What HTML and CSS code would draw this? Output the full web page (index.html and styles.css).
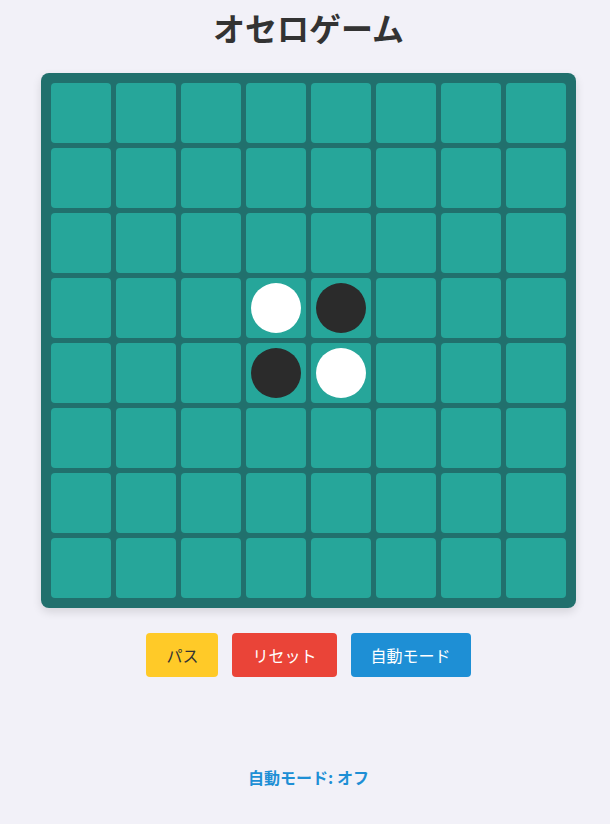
FILE: index.html
```html
<!DOCTYPE html>
<html lang="ja">
<head>
  <meta charset="UTF-8">
  <meta name="viewport" content="width=device-width, initial-scale=1.0">
  <title>オセロゲーム</title>
  <link rel="stylesheet" href="styles.css">
</head>
<body>
  <div class="container">
    <h1>オセロゲーム</h1>

    <div class="board" id="board"></div>

    <div class="controls">
      <button type="button" class="btn btn-pass">パス</button>
      <button type="button" class="btn btn-reset">リセット</button>
      <button type="button" class="btn btn-auto">自動モード</button>
    </div>

    <div class="message" id="message"></div>
    <div class="status" id="status">自動モード: オフ</div>
  </div>

  <script>
    const board = document.getElementById("board");
    const cells = [];

    for (let row = 0; row < 8; row++) {
      for (let col = 0; col < 8; col++) {
        cells.push({ row, col, piece: null });
      }
    }

    cells[3 * 8 + 3].piece = "white";
    cells[3 * 8 + 4].piece = "black";
    cells[4 * 8 + 3].piece = "black";
    cells[4 * 8 + 4].piece = "white";

    function renderBoard() {
      let html = "";
      cells.forEach((cell) => {
        html += '<div class="cell">';
        if (cell.piece) {
          html += `<div class="disc ${cell.piece}"></div>`;
        }
        html += "</div>";
      });
      board.innerHTML = html;
    }

    renderBoard();
  </script>
</body>
</html>
```

FILE: styles.css
```css
body {
  font-family: "Noto Sans CJK JP", "Noto Sans", sans-serif;
  margin: 0;
  padding: 0;
  background-color: #f2f1f8;
  color: #333333;
}

.container {
  display: flex;
  flex-direction: column;
  align-items: center;
  padding-left: 7px;
}

h1 {
  font-size: 32px;
  font-weight: 700;
  color: #333333;
  margin: 5px 0 24px;
  line-height: 44px;
}

.board {
  display: grid;
  grid-template-columns: repeat(8, 60px);
  grid-template-rows: repeat(8, 60px);
  gap: 5px;
  padding: 10px;
  background-color: #21706d;
  border-radius: 8px;
  box-shadow: 0 4px 10px rgba(0, 0, 0, 0.12);
}

.cell {
  background-color: #26a69a;
  border-radius: 4px;
  display: flex;
  justify-content: center;
  align-items: center;
}

.disc {
  width: 50px;
  height: 50px;
  border-radius: 50%;
}

.disc.black {
  background-color: #2b2b2b;
}

.disc.white {
  background-color: #ffffff;
}

.controls {
  display: flex;
  gap: 14px;
  margin-top: 25px;
}

.btn {
  font-family: inherit;
  font-size: 16px;
  line-height: 24px;
  padding: 10px 20px;
  border: none;
  border-radius: 4px;
  cursor: pointer;
  color: #ffffff;
}

.btn-pass {
  background-color: #ffca28;
  color: #333333;
}

.btn-reset {
  background-color: #ea4438;
}

.btn-auto {
  background-color: #1e8fd5;
}

.message {
  height: 24px;
  margin-top: 30px;
}

.status {
  margin-top: 34px;
  font-size: 16px;
  font-weight: 700;
  color: #1e8fd5;
}
```
